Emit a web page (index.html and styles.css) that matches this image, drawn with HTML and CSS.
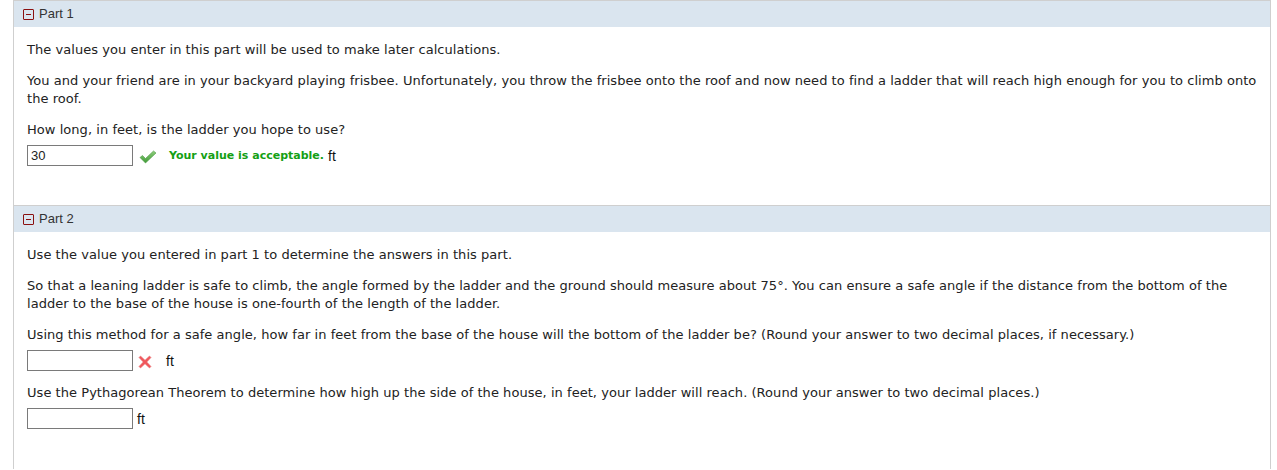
FILE: index.html
```html
<!DOCTYPE html>
<html lang="en">
<head>
    <meta charset="UTF-8">
    <title>Part 1 / Part 2</title>
    <link rel="stylesheet" href="styles.css">
</head>
<body>
    <div class="parts">
        <div class="part">
            <div class="part-header">
                <span class="toggle"></span>
                <span class="part-title">Part 1</span>
            </div>
            <div class="part-body part-body-first">
                <p>The values you enter in this part will be used to make later calculations.</p>
                <p>You and your friend are in your backyard playing frisbee. Unfortunately, you throw the frisbee onto the roof and now need to find a ladder that will reach high enough for you to climb onto the roof.</p>
                <p class="question">How long, in feet, is the ladder you hope to use?</p>
                <div class="answer-row">
                    <input type="text" class="answer" value="30">
                    <svg class="mark" width="18" height="14" viewBox="0 0 18 14">
                        <defs>
                            <linearGradient id="ok" x1="0" y1="0" x2="0" y2="1">
                                <stop offset="0" stop-color="#8fce7c"/>
                                <stop offset="1" stop-color="#3f9a36"/>
                            </linearGradient>
                        </defs>
                        <path d="M1 7.5 L3.5 5.5 L6.5 8.5 L14.5 1 L17 3 L6.5 13 Z" fill="url(#ok)" stroke="#4b9a44" stroke-width="0.6"/>
                    </svg>
                    <span class="feedback">Your value is acceptable.</span>
                    <span class="unit">ft</span>
                </div>
            </div>
        </div>
        <div class="part">
            <div class="part-header">
                <span class="toggle"></span>
                <span class="part-title">Part 2</span>
            </div>
            <div class="part-body">
                <p>Use the value you entered in part 1 to determine the answers in this part.</p>
                <p>So that a leaning ladder is safe to climb, the angle formed by the ladder and the ground should measure about 75&deg;. You can ensure a safe angle if the distance from the bottom of the ladder to the base of the house is one-fourth of the length of the ladder.</p>
                <p class="question">Using this method for a safe angle, how far in feet from the base of the house will the bottom of the ladder be? (Round your answer to two decimal places, if necessary.)</p>
                <div class="answer-row">
                    <input type="text" class="answer" value="">
                    <svg class="mark mark-x" width="14" height="14" viewBox="0 0 14 14">
                        <path d="M2.5 1 L7 5.2 L11.5 1 L13 2.5 L8.8 7 L13 11.5 L11.5 13 L7 8.8 L2.5 13 L1 11.5 L5.2 7 L1 2.5 Z" fill="#f0555a" stroke="#e8787b" stroke-width="0.6"/>
                    </svg>
                    <span class="unit unit-x">ft</span>
                </div>
                <p class="question question-next">Use the Pythagorean Theorem to determine how high up the side of the house, in feet, your ladder will reach. (Round your answer to two decimal places.)</p>
                <div class="answer-row">
                    <input type="text" class="answer" value="">
                    <span class="unit">ft</span>
                </div>
            </div>
        </div>
    </div>
</body>
</html>
```

FILE: styles.css
```css
* {
    margin: 0;
    padding: 0;
    box-sizing: border-box;
}

body {
    background-color: #fff;
    color: #222;
    font-family: 'DejaVu Sans', Verdana, sans-serif;
    font-size: 13px;
    line-height: 18px;
}

.parts {
    margin-left: 13px;
    width: 1258px;
    border: 1px solid #cfcfcf;
    border-bottom: none;
}

.part + .part {
    border-top: 1px solid #cfcfcf;
}

.part-header {
    display: flex;
    align-items: center;
    height: 26px;
    padding-left: 9px;
    background-color: #dae5ef;
}

.toggle {
    position: relative;
    width: 11px;
    height: 11px;
    border: 1px solid #8b1010;
    border-radius: 1px;
    margin-right: 5px;
}

.toggle::after {
    content: "";
    position: absolute;
    left: 2px;
    right: 2px;
    top: 4px;
    height: 1px;
    background-color: #8b1010;
}

.part-title {
    font-family: 'Liberation Sans', Arial, sans-serif;
    font-size: 13px;
    color: #333;
}

.part-body {
    padding: 14px 9px 40px 13px;
    letter-spacing: 0.045px;
}

.part-body-first {
    padding-bottom: 39px;
}

.part-body p {
    margin-bottom: 13px;
}

.part-body p.question {
    margin-bottom: 6px;
}

.part-body p.question-next {
    margin-top: 13px;
}

.answer-row {
    display: flex;
    align-items: center;
    height: 21px;
    letter-spacing: 0;
}

.answer {
    width: 106px;
    height: 21px;
    border: 1px solid #7a7a7a;
    padding: 0 3px;
    font-family: 'Liberation Sans', Arial, sans-serif;
    font-size: 13px;
    color: #222;
    outline: none;
}

.mark {
    margin-left: 6px;
    margin-top: 2px;
}

.mark-x {
    margin-left: 5px;
}

.feedback {
    margin-left: 12px;
    font-weight: bold;
    font-size: 11px;
    color: #14a014;
}

.unit {
    margin-left: 4px;
    font-family: 'Liberation Sans', Arial, sans-serif;
    font-size: 14px;
    color: #111;
}

.unit-x {
    margin-left: 14px;
}
```
